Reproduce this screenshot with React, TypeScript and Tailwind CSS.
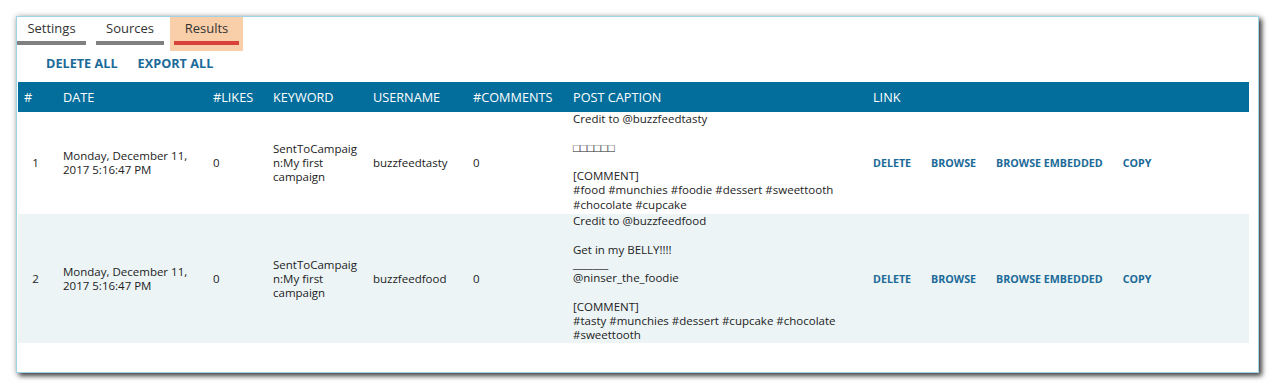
const font = { fontFamily: '"Open Sans", "Noto Sans", sans-serif' };

const rows = [
  {
    n: 1,
    user: 'buzzfeedtasty',
    caption: ['Credit to @buzzfeedtasty', '', '□□□□□□', '', '[COMMENT]', '#food #munchies #foodie #dessert #sweettooth', '#chocolate #cupcake'],
    h: 'h-[102px]',
    bg: 'bg-white',
  },
  {
    n: 2,
    user: 'buzzfeedfood',
    caption: ['Credit to @buzzfeedfood', '', 'Get in my BELLY!!!!', '_______', '@ninser_the_foodie', '', '[COMMENT]', '#tasty #munchies #dessert #cupcake #chocolate', '#sweettooth'],
    h: 'h-[129px]',
    bg: 'bg-[#ecf4f6]',
  },
];

const headers = ['#', 'DATE', '#LIKES', 'KEYWORD', 'USERNAME', '#COMMENTS', 'POST CAPTION', 'LINK'];
const widths = [35, 150, 60, 100, 100, 100, 300, 386];

function Tab({ label, active, w, className = '' }: { label: string; active?: boolean; w: string; className?: string }) {
  return (
    <div className={`${active ? 'bg-[#f9cfa9] px-1' : ''} ${className} pt-[2px] pb-[6px]`}>
      <div className={`${w} text-center text-[13px] leading-[18px] text-[#333]`}>{label}</div>
      <div className={`${w} mt-[4px] h-[4px] ${active ? 'bg-[#d9423b]' : 'bg-[#808080]'}`} />
    </div>
  );
}

export default function App() {
  return (
    <div className="min-h-screen bg-white p-4" style={font}>
      <div className="w-[1243px] h-[357px] border border-[#9fd3e8] bg-white shadow-[3px_3px_5px_rgba(0,0,0,0.7),0_0_6px_rgba(0,0,0,0.25)]">
        <div className="flex items-start">
          <Tab label="Settings" w="w-[69px]" />
          <Tab label="Sources" w="w-[68px]" className="ml-[10px]" />
          <Tab label="Results" w="w-[65px]" active className="ml-[6px]" />
        </div>
        <div className="flex h-[31px] gap-5 pl-[29px] pt-[5px] text-[12.7px] font-bold leading-[14px] text-[#1b6a98]">
          <span>DELETE ALL</span>
          <span>EXPORT ALL</span>
        </div>
        <table className="ml-px table-fixed border-collapse text-[11.5px] text-[#222]" style={{ width: 1231 }}>
          <colgroup>
            {widths.map((w, i) => (
              <col key={i} style={{ width: w }} />
            ))}
          </colgroup>
          <thead>
            <tr className="h-[30px] bg-[#036e9c] text-left text-[12.7px] text-white">
              {headers.map((h, i) => (
                <th key={h} className={`pt-[2px] font-normal ${i === 0 ? 'pl-[6px]' : 'pl-[10px]'}`}>
                  {h}
                </th>
              ))}
            </tr>
          </thead>
          <tbody>
            {rows.map((r) => (
              <tr key={r.n} className={`${r.h} ${r.bg} leading-[14px]`}>
                <td className="text-center align-middle">{r.n}</td>
                <td className="pl-[10px] align-middle">
                  <div>Monday, December 11,</div>
                  <div>2017 5:16:47 PM</div>
                </td>
                <td className="pl-[10px] align-middle">0</td>
                <td className="pl-[10px] align-middle">
                  <div>SentToCampaig</div>
                  <div>n:My first</div>
                  <div>campaign</div>
                </td>
                <td className="pl-[10px] align-middle">{r.user}</td>
                <td className="pl-[10px] align-middle">0</td>
                <td className="pl-[10px] align-top">
                  {r.caption.map((c, i) => (
                    <div key={i} className="h-[14.3px] whitespace-nowrap leading-[14.3px]">
                      {c}
                    </div>
                  ))}
                </td>
                <td className="pl-[10px] align-middle">
                  <div className="flex gap-5 text-[10.7px] font-bold text-[#1b6a98]">
                    <span>DELETE</span>
                    <span>BROWSE</span>
                    <span>BROWSE EMBEDDED</span>
                    <span>COPY</span>
                  </div>
                </td>
              </tr>
            ))}
          </tbody>
        </table>
      </div>
    </div>
  );
}
